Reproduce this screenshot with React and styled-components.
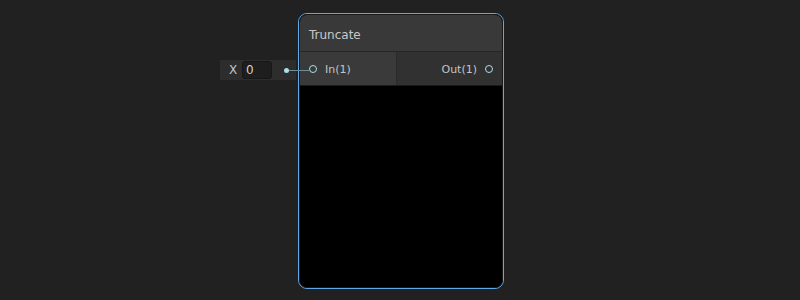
import React from 'react';
import styled, { createGlobalStyle } from 'styled-components';

const GlobalStyle = createGlobalStyle`
  html, body {
    margin: 0;
    padding: 0;
    background: #212121;
  }
  body {
    font-family: "DejaVu Sans", "Liberation Sans", sans-serif;
  }
`;

const Canvas = styled.div`
  position: relative;
  width: 800px;
  height: 300px;
  overflow: hidden;
  background: #212121;
`;

const Node = styled.div`
  position: absolute;
  left: ${(p) => p.x}px;
  top: ${(p) => p.y}px;
  width: ${(p) => p.w}px;
  height: ${(p) => p.h}px;
  box-sizing: border-box;
  border: 1px solid #5fa9e8;
  border-radius: 9px;
  display: flex;
`;

const NodeInner = styled.div`
  flex: 1;
  display: flex;
  flex-direction: column;
  border: 1px solid #191919;
  border-radius: 8px;
  overflow: hidden;
  background: #000;
`;

const Title = styled.div`
  height: 37px;
  flex: none;
  display: flex;
  align-items: center;
  box-sizing: border-box;
  padding: 3px 0 0 9px;
  background: #393939;
  border-bottom: 1px solid #262626;
  color: #c8c8c8;
  font-size: 12px;
`;

const PortRow = styled.div`
  height: 33px;
  flex: none;
  display: flex;
  border-bottom: 1px solid #1a1a1a;
`;

const PortColumn = styled.div`
  flex: ${(p) => (p.side === 'in' ? '0 0 97px' : '1')};
  box-sizing: border-box;
  display: flex;
  align-items: center;
  justify-content: ${(p) => (p.side === 'in' ? 'flex-start' : 'flex-end')};
  gap: 8px;
  padding: ${(p) => (p.side === 'in' ? '2px 0 0 9px' : '2px 9px 0 0')};
  background: ${(p) => (p.side === 'in' ? '#3a3a3a' : '#313131')};
  border-right: ${(p) => (p.side === 'in' ? '1px solid #2a2a2a' : 'none')};
  color: #c4c4c4;
  font-size: 11px;
`;

const Port = styled.span`
  width: 8px;
  height: 8px;
  box-sizing: border-box;
  border: 1.5px solid #a9dfe8;
  border-radius: 50%;
  flex: none;
  margin-top: -2px;
`;

const Body = styled.div`
  flex: 1;
  background: #000;
`;

const InlineInput = styled.div`
  position: absolute;
  left: ${(p) => p.x}px;
  top: ${(p) => p.y}px;
  width: 76px;
  height: 20px;
  display: flex;
  align-items: center;
  background: #2d2d2d;
  color: #c4c4c4;
  font-size: 12px;
  & > * {
    flex: none;
  }
`;

const Label = styled.span`
  width: 22px;
  padding-left: 9px;
  box-sizing: border-box;
`;

const Field = styled.div`
  width: 30px;
  height: 18px;
  box-sizing: border-box;
  background: #1e1e1e;
  border: 1px solid #171717;
  border-radius: 3px;
  padding-left: 3px;
  display: flex;
  align-items: center;
  color: #d2d2d2;
  font-size: 12px;
`;

const Dot = styled.span`
  width: 5px;
  height: 5px;
  margin-left: 12px;
  border-radius: 50%;
  background: #a9dfe8;
`;

const Wire = styled.span`
  width: 21px;
  height: 1px;
  background: #6e8f95;
`;

export default function App() {
  return (
    <>
      <GlobalStyle />
      <Canvas>
        <Node x={298} y={13} w={206} h={276}>
          <NodeInner>
            <Title>Truncate</Title>
            <PortRow>
              <PortColumn side="in">
                <Port />
                <span>In(1)</span>
              </PortColumn>
              <PortColumn side="out">
                <span>Out(1)</span>
                <Port />
              </PortColumn>
            </PortRow>
            <Body />
          </NodeInner>
        </Node>
        <InlineInput x={220} y={60}>
          <Label>X</Label>
          <Field>0</Field>
          <Dot />
          <Wire />
        </InlineInput>
      </Canvas>
    </>
  );
}
